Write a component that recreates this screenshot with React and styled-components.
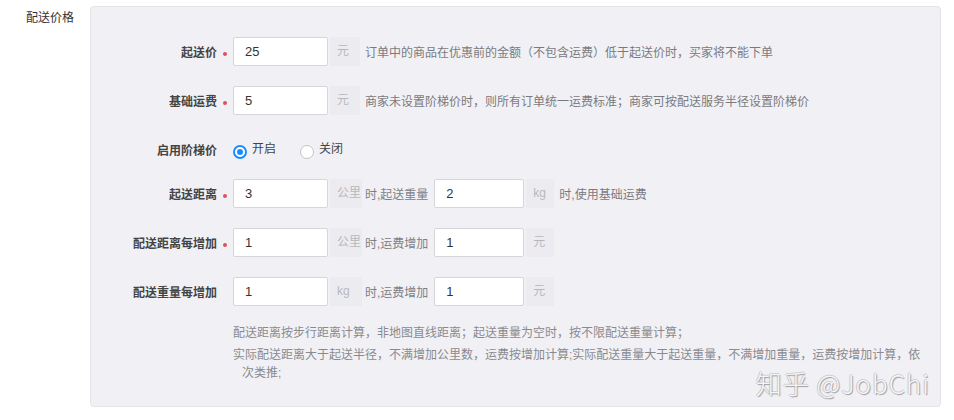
import React from 'react';
import styled, { createGlobalStyle } from 'styled-components';

const GlobalStyle = createGlobalStyle`
	html, body {
		margin: 0;
		padding: 0;
		background: #fff;
	}
	body {
		font-family: 'Liberation Sans', 'Noto Sans CJK SC', sans-serif;
		font-size: 12px;
		color: #333;
	}
`;

const Section = styled.div`
	display: flex;
	width: 954px;
	height: 420px;
	padding-top: 6px;
	box-sizing: border-box;
`;

const SectionTitle = styled.div`
	width: 90px;
	padding: 2px 0 0 26px;
	box-sizing: border-box;
	font-size: 12px;
	color: #333;
	line-height: 20px;
`;

const Panel = styled.div`
	position: relative;
	width: 851px;
	height: 401px;
	box-sizing: border-box;
	background: #f1f1f5;
	border: 1px solid #e3e3e8;
	border-radius: 4px;
	padding-top: 30px;
	display: flex;
	flex-direction: column;
`;

const Row = styled.div`
	display: flex;
	align-items: center;
	height: 29px;
	margin-top: ${(p) => p.gap ?? 20}px;
	&:first-child {
		margin-top: 0;
	}
`;

const Label = styled.div`
	width: 126px;
	text-align: right;
	font-weight: bold;
	color: #444;
	white-space: nowrap;
`;

const Required = styled.span`
	width: 16px;
	display: flex;
	justify-content: center;
	&::before {
		content: '';
		display: ${(p) => (p.on ? 'block' : 'none')};
		width: 4px;
		height: 4px;
		border-radius: 50%;
		background: #e0505a;
		margin-top: 4px;
	}
`;

const Input = styled.div`
	width: ${(p) => p.w || 95}px;
	height: 29px;
	box-sizing: border-box;
	background: #fff;
	border: 1px solid #d6d6da;
	border-radius: 2px;
	padding-left: 11px;
	font-size: 13px;
	line-height: 27px;
	color: #333;
`;

const Unit = styled.div`
	height: 29px;
	width: ${(p) => p.w || 30}px;
	margin-left: 2px;
	background: #ececf0;
	color: #b8b8bc;
	font-size: 12px;
	line-height: 29px;
	padding-left: 7px;
	box-sizing: border-box;
	white-space: nowrap;
`;

const Hint = styled.span`
	color: #7a7a7e;
	margin-left: ${(p) => p.ml ?? 5}px;
	white-space: nowrap;
`;

const Joiner = styled.span`
	color: #808084;
	margin: 0 6px 0 3px;
	white-space: nowrap;
`;

const RadioGroup = styled.div`
	display: flex;
	align-items: center;
	margin-left: 16px;
`;

const RadioItem = styled.label`
	display: flex;
	align-items: flex-start;
	margin-right: 24px;
	color: #444;
	font-size: 12px;
	line-height: 16px;
`;

const Circle = styled.span`
	width: 14px;
	height: 14px;
	box-sizing: border-box;
	border-radius: 50%;
	border: ${(p) => (p.checked ? '2px solid #1a8cff' : '1px solid #c4c4c8')};
	background: #fff;
	margin: 4px 5px 0 0;
	display: flex;
	align-items: center;
	justify-content: center;
	&::after {
		content: '';
		display: ${(p) => (p.checked ? 'block' : 'none')};
		width: 6px;
		height: 6px;
		border-radius: 50%;
		background: #1a8cff;
	}
`;

const Notes = styled.div`
	margin: 18px 0 0 142px;
	width: 692px;
	color: #8a8a8e;
	font-size: 12px;
	line-height: 18px;
`;

const Note = styled.p`
	margin: 0 0 4px;
	padding-left: 9px;
	text-indent: -9px;
`;

const Watermark = styled.div`
	position: absolute;
	right: 10px;
	bottom: 8px;
	font-family: 'Noto Sans CJK SC', 'DejaVu Sans', sans-serif;
	font-weight: 300;
	font-size: 26px;
	line-height: 30px;
	letter-spacing: 1px;
	color: #f6f6f8;
	text-shadow: 1px 1px 1px #9a9a9e, -1px 0 0 #c8c8cc, 0 -1px 0 #d0d0d4;
	pointer-events: none;
`;

const App = () => {
	return (
		<>
			<GlobalStyle />
			<Section>
				<SectionTitle>配送价格</SectionTitle>
				<Panel>
					<Row>
						<Label>起送价</Label>
						<Required on />
						<Input>25</Input>
						<Unit>元</Unit>
						<Hint>订单中的商品在优惠前的金额（不包含运费）低于起送价时，买家将不能下单</Hint>
					</Row>
					<Row>
						<Label>基础运费</Label>
						<Required on />
						<Input>5</Input>
						<Unit>元</Unit>
						<Hint>商家未设置阶梯价时，则所有订单统一运费标准；商家可按配送服务半径设置阶梯价</Hint>
					</Row>
					<Row>
						<Label>启用阶梯价</Label>
						<RadioGroup>
							<RadioItem>
								<Circle checked />
								开启
							</RadioItem>
							<RadioItem>
								<Circle />
								关闭
							</RadioItem>
						</RadioGroup>
					</Row>
					<Row gap={15}>
						<Label>起送距离</Label>
						<Required on />
						<Input>3</Input>
						<Unit w={32}>公里</Unit>
						<Joiner>时,起送重量</Joiner>
						<Input w={90}>2</Input>
						<Unit w={28}>kg</Unit>
						<Hint>时,使用基础运费</Hint>
					</Row>
					<Row>
						<Label>配送距离每增加</Label>
						<Required on />
						<Input>1</Input>
						<Unit w={32}>公里</Unit>
						<Joiner>时,运费增加</Joiner>
						<Input w={90}>1</Input>
						<Unit w={28}>元</Unit>
					</Row>
					<Row>
						<Label>配送重量每增加</Label>
						<Required />
						<Input>1</Input>
						<Unit w={32}>kg</Unit>
						<Joiner>时,运费增加</Joiner>
						<Input w={90}>1</Input>
						<Unit w={28}>元</Unit>
					</Row>
					<Notes>
						<Note>配送距离按步行距离计算，非地图直线距离；起送重量为空时，按不限配送重量计算；</Note>
						<Note>
							实际配送距离大于起送半径，不满增加公里数，运费按增加计算;实际配送重量大于起送重量，不满增加重量，运费按增加计算，依次类推;
						</Note>
					</Notes>
					<Watermark>知乎 @JobChi</Watermark>
				</Panel>
			</Section>
		</>
	);
};

export default App;
